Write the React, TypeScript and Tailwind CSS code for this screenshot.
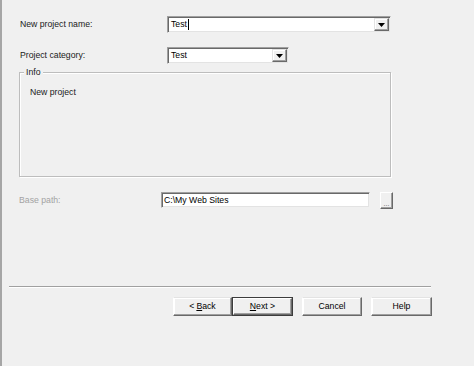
import React from "react";

function DropArrow() {
  return (
    <div className="h-full w-[15px] bg-[#f0f0f0] border border-t-[#e3e3e3] border-l-[#e3e3e3] border-r-[#696969] border-b-[#696969] shadow-[inset_-1px_-1px_0_#a0a0a0,inset_1px_1px_0_#ffffff] flex items-center justify-center">
      <svg width="7" height="4" viewBox="0 0 7 4">
        <polygon points="0,0 7,0 3.5,4" fill="#000" />
      </svg>
    </div>
  );
}

function Combo({ width, text, caret }: { width: string; text: string; caret?: boolean }) {
  return (
    <div
      className={`${width} h-[17px] bg-white border border-t-[#a0a0a0] border-l-[#a0a0a0] border-r-[#f0f0f0] border-b-[#f0f0f0] shadow-[inset_1px_1px_0_#696969,inset_-1px_-1px_0_#e3e3e3] flex items-stretch p-[1px]`}
    >
      <div className="flex-1 flex items-center pl-[2px] text-black">
        <span>{text}</span>
        {caret && <span className="inline-block w-px h-[11px] bg-black ml-[1px]" />}
      </div>
      <DropArrow />
    </div>
  );
}

function Btn({ children, def, width }: { children: React.ReactNode; def?: boolean; width: string }) {
  if (def) {
    return (
      <div className={`${width} h-[19px] border border-[#3c3c3c] flex`}>
        <div className="flex-1 bg-[#f0f0f0] border border-t-[#ffffff] border-l-[#ffffff] border-r-[#696969] border-b-[#696969] shadow-[inset_-1px_-1px_0_#a0a0a0] flex items-center justify-center text-black">
          {children}
        </div>
      </div>
    );
  }
  return (
    <div
      className={`${width} h-[19px] bg-[#f0f0f0] border border-t-[#e3e3e3] border-l-[#ffffff] border-r-[#696969] border-b-[#696969] shadow-[inset_-1px_-1px_0_#a0a0a0,inset_1px_1px_0_#ffffff] flex items-center justify-center text-black`}
    >
      {children}
    </div>
  );
}

export default function App() {
  return (
    <div
      className="w-[474px] h-[366px] bg-[#f0f0f0] border-l-[2px] border-[#a6a6a6] text-[8.7px] leading-[11px] text-[#1a1a1a] overflow-hidden"
      style={{ fontFamily: '"Liberation Sans", Arial, sans-serif' }}
    >
      {/* Row 1 */}
      <div className="mt-[16px] h-[17px] flex items-center pl-[18px]">
        <div className="w-[147px]">New project name:</div>
        <Combo width="w-[224px]" text="Test" caret />
      </div>
      {/* Row 2 */}
      <div className="mt-[14px] h-[17px] flex items-center pl-[18px]">
        <div className="w-[147px]">Project category:</div>
        <Combo width="w-[122px]" text="Test" />
      </div>
      {/* Group box */}
      <div className="ml-[17px] mt-[8px] w-[372px] h-[105px] border border-[#bdbdbd] shadow-[inset_1px_1px_0_#ffffff,1px_1px_0_#ffffff] relative pl-[10px] pt-[14px]">
        <span className="absolute -top-[6px] left-[4px] px-[2px] bg-[#f0f0f0]">Info</span>
        <div>New project</div>
      </div>
      {/* Base path row */}
      <div className="mt-[15px] h-[17px] flex items-start pl-[17px]">
        <div className="w-[142px] h-[16px] flex items-center text-[#a3a3a3]">Base path:</div>
        <div className="w-[209px] h-[16px] bg-white border border-t-[#a0a0a0] border-l-[#a0a0a0] border-r-[#f0f0f0] border-b-[#f0f0f0] shadow-[inset_1px_1px_0_#696969,inset_-1px_-1px_0_#e3e3e3] flex items-center pl-[2px] text-black">
          C:\My Web Sites
        </div>
        <div className="ml-[10px] w-[13px] h-[17px] bg-[#f0f0f0] border border-t-[#ffffff] border-l-[#ffffff] border-r-[#696969] border-b-[#696969] shadow-[inset_-1px_-1px_0_#a0a0a0] flex items-end justify-center text-[7px] leading-[9px] text-[#555]">
          ...
        </div>
      </div>
      {/* Separator */}
      <div className="mt-[77px] ml-[7px] w-[422px] h-[2px] border-t border-t-[#a0a0a0] border-b border-b-[#ffffff]" />
      {/* Buttons */}
      <div className="mt-[9px] flex pl-[171px]">
        <Btn width="w-[59px]">
          &lt; <span className="underline ml-[2px]">B</span>ack
        </Btn>
        <Btn width="w-[61px]" def>
          <span className="underline">N</span>ext &gt;
        </Btn>
        <div className="ml-[9px]">
          <Btn width="w-[60px]">Cancel</Btn>
        </div>
        <div className="ml-[9px]">
          <Btn width="w-[61px]">Help</Btn>
        </div>
      </div>
    </div>
  );
}
